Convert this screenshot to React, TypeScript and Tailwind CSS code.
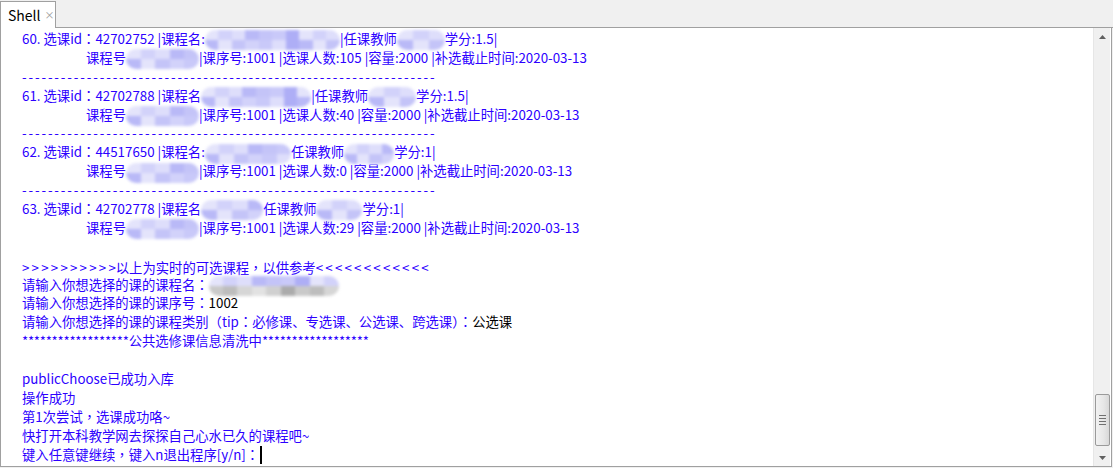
import React from 'react';

type Seg = string | { blur: number; gray?: boolean } | { input: string };

const lav = ['#e4e4fb', '#c9c9f9', '#b9b9f7', '#d2d2fa', '#aeaef6', '#c4c4f8', '#dedefb'];
const grays = ['#d6d6d6', '#bdbdbd', '#c9c9c9', '#ababab', '#d0d0d0', '#e2e2e2'];

// full-width ，：（） drawn centred, the way the console font draws them
function txt(s: string) {
  return s.split(/([，：（）])/).map((p, i) =>
    /^[，：（）]$/.test(p) ? (
      <span key={i} className="font-['Noto_Sans_CJK_TC',sans-serif]">{p}</span>
    ) : (
      <React.Fragment key={i}>{p}</React.Fragment>
    )
  );
}

function Blur({ w, gray }: { w: number; gray?: boolean }) {
  const tones = gray ? grays : lav;
  const n = Math.max(3, Math.round(w / 14));
  return (
    <span
      className="inline-block align-middle h-[20px] -my-[4px] overflow-hidden rounded-[10px] blur-[1.5px]"
      style={{ width: w }}
    >
      <span className="flex h-full">
        {Array.from({ length: n }).map((_, i) => (
          <span key={i} className="flex-1 flex flex-col">
            <span className="flex-1" style={{ background: gray ? lav[(i * 3) % lav.length] : tones[(i * 3) % tones.length] }} />
            <span className="flex-1" style={{ background: tones[(i * 5 + 2) % tones.length] }} />
          </span>
        ))}
      </span>
    </span>
  );
}

function Line({ segs, indent }: { segs: Seg[]; indent?: boolean }) {
  return (
    <div className={indent ? 'h-[18.9px] whitespace-pre pl-[64px]' : 'h-[18.9px] whitespace-pre'}>
      {segs.map((s, i) =>
        typeof s === 'string' ? (
          <span key={i}>{txt(s)}</span>
        ) : 'blur' in s ? (
          <Blur key={i} w={s.blur} gray={s.gray} />
        ) : (
          <span key={i} className="text-black">{txt(s.input)}</span>
        )
      )}
    </div>
  );
}

function Dashes() {
  return (
    <div className="h-[18.9px] whitespace-pre">
      <span className="tracking-[1.85px]">{'-'.repeat(63)}</span>-
    </div>
  );
}

const courses = [
  { no: 60, id: '42702752', a: '|课程名:', b1: 135, t: '|任课教师', b2: 48, c: '学分:1.5|', n: '105' },
  { no: 61, id: '42702788', a: '|课程名', b1: 110, t: '|任课教师', b2: 48, c: '学分:1.5|', n: '40' },
  { no: 62, id: '44517650', a: '|课程名:', b1: 86, t: '任课教师', b2: 50, c: '学分:1|', n: '0' },
  { no: 63, id: '42702778', a: '|课程名', b1: 62, t: '任课教师', b2: 46, c: '学分:1|', n: '29' },
];

export default function App() {
  return (
    <div className="w-[1113px] h-[468px] bg-[#f0f0f0] flex flex-col font-['Noto_Sans_CJK_SC','Liberation_Sans',sans-serif]">
      {/* tab strip */}
      <div className="h-[28px] flex items-end border-b border-[#a0a0a0]">
        <div className="h-[27px] w-[56px] -mb-px bg-white border border-b-0 border-[#a0a0a0] flex items-center pl-[7px] gap-[4px]">
          <span className="text-[14px] text-black">Shell</span>
          <span className="text-[10px] text-[#9a9a9a] leading-none">×</span>
        </div>
      </div>

      {/* console */}
      <div className="flex-1 flex bg-white border-x border-b border-[#a0a0a0] mr-[1px] mb-[1px] min-h-0">
        <div className="flex-1 pl-[21px] pt-[2px] text-[13.33px] leading-[18.9px] text-[#2c00ff] overflow-hidden">
          {courses.map((c, i) => (
            <React.Fragment key={c.no}>
              {i > 0 && <Dashes />}
              <Line segs={[`${c.no}. 选课id：${c.id} `, c.a, { blur: c.b1 }, c.t, { blur: c.b2 }, c.c]} />
              <Line
                indent
                segs={['课程号', { blur: 73 }, `|课序号:1001 |选课人数:${c.n} |容量:2000 |补选截止时间:2020-03-13`]}
              />
            </React.Fragment>
          ))}
          <div className="h-[18.9px]" />
          <div className="h-[18.9px] whitespace-pre pt-[2px]">
            <span className="tracking-[2.2px]">{'>'.repeat(9)}</span>
            {'>'}以上为实时的可选课程{txt('，')}以供参考
            <span className="tracking-[2.2px]">{'<'.repeat(11)}</span>
            {'<'}
          </div>
          <Line segs={['请输入你想选择的课的课程名：', { blur: 130, gray: true }]} />
          <Line segs={['请输入你想选择的课的课序号：', { input: '1002' }]} />
          <Line segs={['请输入你想选择的课的课程类别（tip：必修课、专选课、公选课、跨选课）：', { input: '公选课' }]} />
          <div className="h-[18.9px] whitespace-pre">
            <span className="tracking-[-0.3px]">{'*'.repeat(18)}</span>公共选修课信息清洗中
            <span className="tracking-[-0.3px]">{'*'.repeat(18)}</span>
          </div>
          <div className="h-[18.9px]" />
          <Line segs={['publicChoose已成功入库']} />
          <Line segs={['操作成功']} />
          <Line segs={['第1次尝试，选课成功咯~']} />
          <Line segs={['快打开本科教学网去探探自己心水已久的课程吧~']} />
          <div className="h-[18.9px] whitespace-pre flex items-center">
            <span>{txt('键入任意键继续，键入n退出程序[y/n]：')}</span>
            <span className="inline-block w-[2px] h-[18px] bg-black ml-[1px]" />
          </div>
        </div>

        {/* scrollbar */}
        <div className="w-[17px] mr-[1px] bg-[#f0f0f0] border-l border-[#e6e6e6] flex flex-col items-center">
          <div className="h-[17px] w-full flex items-center justify-center">
            <svg width="7" height="4" viewBox="0 0 7 4"><path d="M3.5 0 L7 4 L0 4 Z" fill="#606060" /></svg>
          </div>
          <div className="flex-1" />
          <div className="h-[52px] w-[15px] mb-[3px] rounded-[2px] border border-[#9a9a9a] bg-[linear-gradient(to_right,#f2f2f2,#e6e6e6_60%,#d8d8d8)] flex flex-col items-center justify-center gap-[2px]">
            <span className="w-[7px] h-px bg-[#707070]" />
            <span className="w-[7px] h-px bg-[#707070]" />
            <span className="w-[7px] h-px bg-[#707070]" />
            <span className="w-[7px] h-px bg-[#707070]" />
          </div>
          <div className="h-[17px] w-full flex items-center justify-center">
            <svg width="7" height="4" viewBox="0 0 7 4"><path d="M0 0 L7 0 L3.5 4 Z" fill="#606060" /></svg>
          </div>
        </div>
      </div>
    </div>
  );
}
